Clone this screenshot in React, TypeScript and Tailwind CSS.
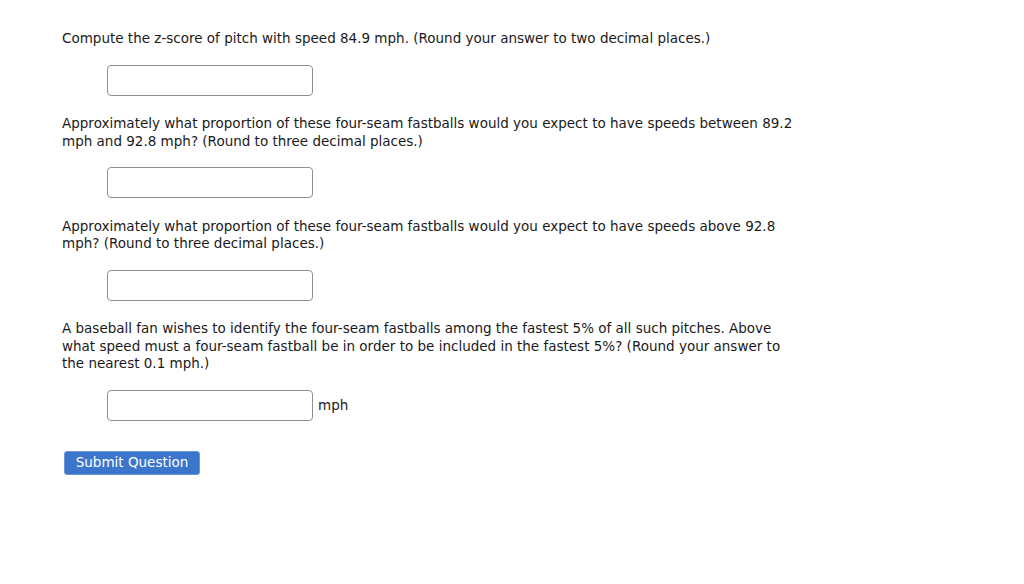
import React from 'react';

const AnswerBox: React.FC<{ unit?: string }> = ({ unit }) => (
  <div className="flex items-center pl-[45px]">
    <input
      type="text"
      className="w-[206px] h-[31px] rounded-[4px] border border-[#8f8f8f] bg-white outline-none"
    />
    {unit && <span className="ml-[5px]">{unit}</span>}
  </div>
);

const Question: React.FC<{ lines: string[]; unit?: string }> = ({ lines, unit }) => (
  <div className="flex flex-col">
    <p className="leading-[17.5px]">
      {lines.map((l, i) => (
        <React.Fragment key={i}>
          {i > 0 && <br />}
          {l}
        </React.Fragment>
      ))}
    </p>
    <div className="mt-[17px]">
      <AnswerBox unit={unit} />
    </div>
  </div>
);

export default function App() {
  return (
    <div
      className="w-[1024px] h-[584px] bg-white text-[13.5px] text-[#1a1a1a] px-[62px] pt-[30px]"
      style={{ fontFamily: '"DejaVu Sans", sans-serif' }}
    >
      <div className="flex flex-col gap-[19.5px]">
        <Question lines={['Compute the z-score of pitch with speed 84.9 mph. (Round your answer to two decimal places.)']} />
        <Question
          lines={[
            'Approximately what proportion of these four-seam fastballs would you expect to have speeds between 89.2',
            'mph and 92.8 mph? (Round to three decimal places.)',
          ]}
        />
        <Question
          lines={[
            'Approximately what proportion of these four-seam fastballs would you expect to have speeds above 92.8',
            'mph? (Round to three decimal places.)',
          ]}
        />
        <Question
          unit="mph"
          lines={[
            'A baseball fan wishes to identify the four-seam fastballs among the fastest 5% of all such pitches. Above',
            'what speed must a four-seam fastball be in order to be included in the fastest 5%? (Round your answer to',
            'the nearest 0.1 mph.)',
          ]}
        />
      </div>
      <button className="mt-[30px] ml-[2px] h-[24px] w-[136px] rounded-[3px] bg-[#3b76cc] border border-[#6d98d8] text-white text-[13.5px]">
        Submit Question
      </button>
    </div>
  );
}
